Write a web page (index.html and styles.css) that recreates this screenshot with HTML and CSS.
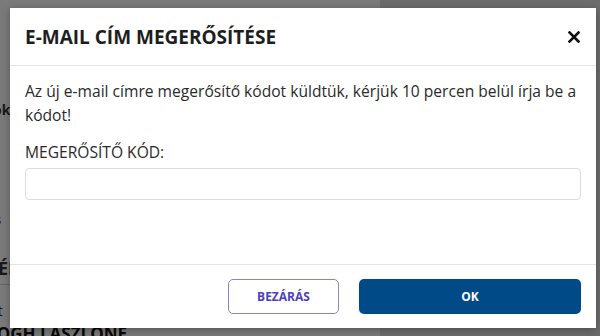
FILE: index.html
```html
<!DOCTYPE html>
<html>

<head>
    <meta name="viewport" content="width=device-width, initial-scale=1.0">
    <title>E-mail cím megerősítése</title>
    <link rel="stylesheet" href="styles.css">
</head>

<body>
    <div id="page">
        <div class="page-main">
            <div class="page-row row-a">Adatok</div>
            <div class="page-row row-el">Település</div>
            <div class="page-row row-head">ÉRTESÍTÉS</div>
            <div class="page-row row-t">Kontakt</div>
            <div class="page-row row-name">BALOGH LÁSZLÓNÉ</div>
        </div>
        <div class="page-side"></div>
    </div>
    <div id="overlay"></div>

    <div id="modal">
        <div class="modal-header">
            <h1 class="modal-title">E-MAIL CÍM MEGERŐSÍTÉSE</h1>
            <button class="modal-close" aria-label="Bezárás">
                <svg width="12" height="12" viewBox="0 0 12 12">
                    <path d="M1.5 1.5 L10.5 10.5 M10.5 1.5 L1.5 10.5" stroke="#111" stroke-width="2.6" stroke-linecap="square" />
                </svg>
            </button>
        </div>
        <div class="modal-body">
            <p class="modal-text">Az új e-mail címre megerősítő kódot küldtük, kérjük 10 percen belül írja be a kódot!</p>
            <label class="code-label" for="code-input">MEGERŐSÍTŐ KÓD:</label>
            <input type="text" id="code-input" class="code-input">
        </div>
        <div class="modal-footer">
            <button class="btn btn-close">BEZÁRÁS</button>
            <button class="btn btn-ok">OK</button>
        </div>
    </div>
</body>

</html>
```

FILE: styles.css
```css
body {
    margin: 0;
    font-family: "Open Sans", "Liberation Sans", sans-serif;
    color: #222;
    overflow: hidden;
    width: 600px;
    height: 336px;
}

/* háttéroldal */
#page {
    display: flex;
    height: 336px;
}

.page-main {
    width: 380px;
    background: #f4f4f4;
    display: flex;
    flex-direction: column;
}

.page-side {
    flex: 1;
    background: #d8d8d8;
}

.page-row {
    font-size: 14px;
    color: #333;
    white-space: nowrap;
}

.row-a {
    margin: 100px 0 0 -40px;
    font-weight: bold;
}

.row-el {
    margin: 92px 0 0 -52px;
    font-size: 12px;
}

.row-head {
    margin: 28px 0 0 -2px;
    font-size: 18px;
    font-weight: bold;
    padding-bottom: 4px;
    border-bottom: 1px solid #c8c8c8;
}

.row-t {
    margin: 16px 0 0 -48px;
}

.row-name {
    margin: 2px 0 0 -36px;
    font-size: 17px;
    font-weight: bold;
    color: #111;
}

#overlay {
    position: absolute;
    inset: 0;
    background: rgba(0, 0, 0, 0.5);
}

/* ablak */
#modal {
    position: absolute;
    left: 10px;
    top: 8px;
    width: 586px;
    height: 320px;
    background: #fff;
    display: flex;
    flex-direction: column;
    box-shadow: 0 2px 8px rgba(0, 0, 0, 0.3);
}

.modal-header {
    display: flex;
    align-items: center;
    justify-content: space-between;
    height: 57px;
    padding: 0 15px;
    border-bottom: 1px solid #e3e3e3;
}

.modal-title {
    margin: 0;
    font-size: 19px;
    font-weight: bold;
    color: #1e1e1e;
}

.modal-close {
    border: none;
    background: none;
    padding: 0;
    width: 12px;
    height: 12px;
    display: flex;
    margin-right: 1px;
    cursor: pointer;
}

.modal-body {
    flex: 1;
    padding: 13px 15px 0;
    display: flex;
    flex-direction: column;
}

.modal-text {
    margin: 0;
    font-size: 15.6px;
    line-height: 24px;
    color: #2a2a2a;
}

.code-label {
    margin-top: 13px;
    font-size: 15.6px;
    line-height: 24px;
    color: #2a2a2a;
}

.code-input {
    margin-top: 4px;
    height: 32px;
    box-sizing: border-box;
    border: 1px solid #dcdcdc;
    border-radius: 4px;
    padding: 0 10px;
    font-family: inherit;
    font-size: 15px;
}

.modal-footer {
    display: flex;
    justify-content: flex-end;
    gap: 20px;
    padding: 14px 15px 14px;
    border-top: 1px solid #e3e3e3;
}

.btn {
    height: 35px;
    box-sizing: border-box;
    border-radius: 5px;
    font-family: inherit;
    font-size: 12px;
    font-weight: bold;
    cursor: pointer;
}

.btn-close {
    width: 111px;
    background: #fff;
    border: 1px solid #8a85c8;
    color: #4a3fbf;
}

.btn-ok {
    width: 222px;
    background: #004a88;
    border: none;
    color: #fff;
}
```
